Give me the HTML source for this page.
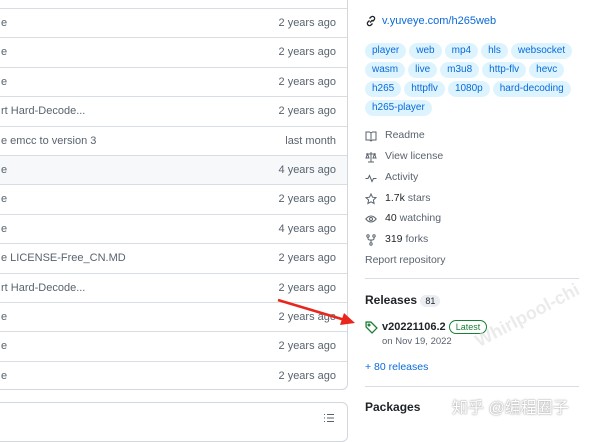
<!DOCTYPE html>
<html><head><meta charset="utf-8"><style>
*{margin:0;padding:0;box-sizing:border-box}
body{width:600px;height:427px;overflow:hidden;background:#fff;font-family:"Liberation Sans","Noto Sans CJK SC",sans-serif;position:relative;color:#1f2328}
.tbl{position:absolute;left:-10px;top:-10px;width:358px;height:400px;border:1px solid #d0d7de;border-radius:6px;overflow:hidden}
.row{position:absolute;left:0;width:100%;height:29.4px;border-top:1px solid #d8dee4;font-size:11px;color:#59636e}
.row .l{position:absolute;left:10px;top:8px}
.row .r{position:absolute;right:11px;top:8px}
.box2{position:absolute;left:-10px;top:402px;width:358px;height:40px;border:1px solid #d0d7de;border-radius:6px}
.side{position:absolute;left:365px;font-size:10.5px;color:#59636e}
.tag{display:inline-block;background:#ddf4ff;color:#0969da;border-radius:10px;padding:2px 7px;font-size:10px;margin-right:3px;height:16px;line-height:12px}
.tags{position:absolute;left:365px;top:40px;width:220px;line-height:18.5px}
.ic{position:absolute;left:365px;width:12px;height:12px}
.hr{position:absolute;left:365px;width:214px;border-top:1px solid #d8dee4}
</style></head><body>
<div class="tbl">
<div class="row" style="top:17px"><span class="l">e</span><span class="r">2 years ago</span></div>
<div class="row" style="top:46.4px"><span class="l">e</span><span class="r">2 years ago</span></div>
<div class="row" style="top:75.8px"><span class="l">e</span><span class="r">2 years ago</span></div>
<div class="row" style="top:105.2px"><span class="l">rt Hard-Decode...</span><span class="r">2 years ago</span></div>
<div class="row" style="top:134.6px"><span class="l">e emcc to version 3</span><span class="r">last month</span></div>
<div class="row" style="top:164px;background:#f6f8fa"><span class="l">e</span><span class="r">4 years ago</span></div>
<div class="row" style="top:193.4px"><span class="l">e</span><span class="r">2 years ago</span></div>
<div class="row" style="top:222.8px"><span class="l">e</span><span class="r">4 years ago</span></div>
<div class="row" style="top:252.2px"><span class="l">e LICENSE-Free_CN.MD</span><span class="r">2 years ago</span></div>
<div class="row" style="top:281.6px"><span class="l">rt Hard-Decode...</span><span class="r">2 years ago</span></div>
<div class="row" style="top:311px"><span class="l">e</span><span class="r">2 years ago</span></div>
<div class="row" style="top:340.4px"><span class="l">e</span><span class="r">2 years ago</span></div>
<div class="row" style="top:369.8px"><span class="l">e</span><span class="r">2 years ago</span></div>
</div>
<div class="box2"></div>
<svg style="position:absolute;left:323px;top:412px" width="12" height="12" viewBox="0 0 12 12" stroke="#59636e" stroke-width="1.1"><path d="M4 2.5h7M4 6h7M4 9.5h7M1 2.5h1M1 6h1M1 9.5h1"/></svg>

<svg class="ic" style="top:15px" viewBox="0 0 12 12" fill="none" stroke="#1f2328" stroke-width="1.3"><path d="M5 7.5 7.5 5M4.5 5.5l-1.5 1.5a2 2 0 0 0 3 3l1.5-1.5M7.5 6.5l1.5-1.5a2 2 0 0 0-3-3L4.5 3.5"/></svg>
<div class="side" style="left:382px;top:15px;color:#0969da;font-size:11px">v.yuveye.com/h265web</div>
<div class="tags">
<span class="tag">player</span><span class="tag">web</span><span class="tag">mp4</span><span class="tag">hls</span><span class="tag">websocket</span><br>
<span class="tag">wasm</span><span class="tag">live</span><span class="tag">m3u8</span><span class="tag">http-flv</span><span class="tag">hevc</span><br>
<span class="tag">h265</span><span class="tag">httpflv</span><span class="tag">1080p</span><span class="tag">hard-decoding</span><br>
<span class="tag">h265-player</span>
</div>
<svg class="ic" style="top:130px" viewBox="0 0 12 12" fill="none" stroke="#59636e"><path d="M1 2h3.5l1.5 1 1.5-1H11v8H7.5L6 11 4.5 10H1zM6 3v8"/></svg>
<div class="side" style="left:385px;top:129px">Readme</div>
<svg class="ic" style="top:151px" viewBox="0 0 12 12" fill="none" stroke="#59636e"><path d="M6 1v10M3 11h6M1 3h10M2.5 3 1 7h3zM9.5 3 8 7h3z"/></svg>
<div class="side" style="left:385px;top:150px">View license</div>
<svg class="ic" style="top:172px" viewBox="0 0 12 12" fill="none" stroke="#59636e"><path d="M0.5 6.5h2.5l1.5-3 2.5 6 1.5-3h3"/></svg>
<div class="side" style="left:385px;top:171px">Activity</div>
<svg class="ic" style="top:193px" viewBox="0 0 12 12" fill="none" stroke="#59636e"><path d="M6 1l1.5 3.2 3.5.4-2.6 2.4.7 3.5L6 8.8 2.9 10.5l.7-3.5L1 4.6l3.5-.4z"/></svg>
<div class="side" style="left:385px;top:192px"><b style="color:#1f2328;font-weight:normal">1.7k</b> stars</div>
<svg class="ic" style="top:213px" viewBox="0 0 12 12" fill="none" stroke="#59636e"><path d="M0.8 6Q6 0 11.2 6 6 12 0.8 6z"/><circle cx="6" cy="6" r="1.5"/></svg>
<div class="side" style="left:385px;top:212px"><span style="color:#1f2328">40</span> watching</div>
<svg class="ic" style="top:234px" viewBox="0 0 12 12" fill="none" stroke="#59636e"><circle cx="3" cy="2" r="1.2"/><circle cx="9" cy="2" r="1.2"/><circle cx="6" cy="10" r="1.2"/><path d="M3 3.2v1.5Q3 6 6 6t3-1.3V3.2M6 6v2.8"/></svg>
<div class="side" style="left:385px;top:233px"><span style="color:#1f2328">319</span> forks</div>
<div class="side" style="top:254px">Report repository</div>
<div class="hr" style="top:278px"></div>
<div class="side" style="top:293px;font-size:12px;font-weight:bold;color:#1f2328">Releases <span style="display:inline-block;background:#eaeef2;border-radius:8px;font-size:9px;padding:1px 5px;font-weight:normal">81</span></div>
<svg class="ic" style="top:321px;width:13px;height:13px" viewBox="0 0 12 12" fill="none" stroke="#1a7f37" stroke-width="1.2"><path d="M1 1h4.5L11 6.5 6.5 11 1 5.5z"/><circle cx="3.7" cy="3.7" r=".8"/></svg>
<div class="side" style="left:382px;top:320px;font-size:11px;font-weight:bold;color:#1f2328">v20221106.2 <span style="display:inline-block;border:1px solid #1a7f37;color:#1a7f37;border-radius:9px;font-size:9px;padding:1px 6px;font-weight:normal">Latest</span></div>
<div class="side" style="left:382px;top:336px;font-size:9.5px">on Nov 19, 2022</div>
<div class="side" style="top:361px;color:#0969da">+ 80 releases</div>
<div class="hr" style="top:386px"></div>
<div class="side" style="top:400px;font-size:12px;font-weight:bold;color:#1f2328">Packages</div>

<div style="position:absolute;left:470px;top:305px;transform:rotate(-28deg);font-size:18px;font-weight:bold;color:rgba(215,215,215,.5)">Whirlpool-chi</div>
<div style="position:absolute;left:452px;top:394px;font-size:16px;color:#fff;text-shadow:0 0 2px #aaa,0 0 1px #999">知乎 @编程圈子</div>
<svg style="position:absolute;left:0;top:0" width="600" height="427"><path d="M278 300 L345 320" stroke="#e8261c" stroke-width="2.5"/><path d="M355 323 L340 325 L344 313 z" fill="#e8261c"/></svg>
</body></html>
